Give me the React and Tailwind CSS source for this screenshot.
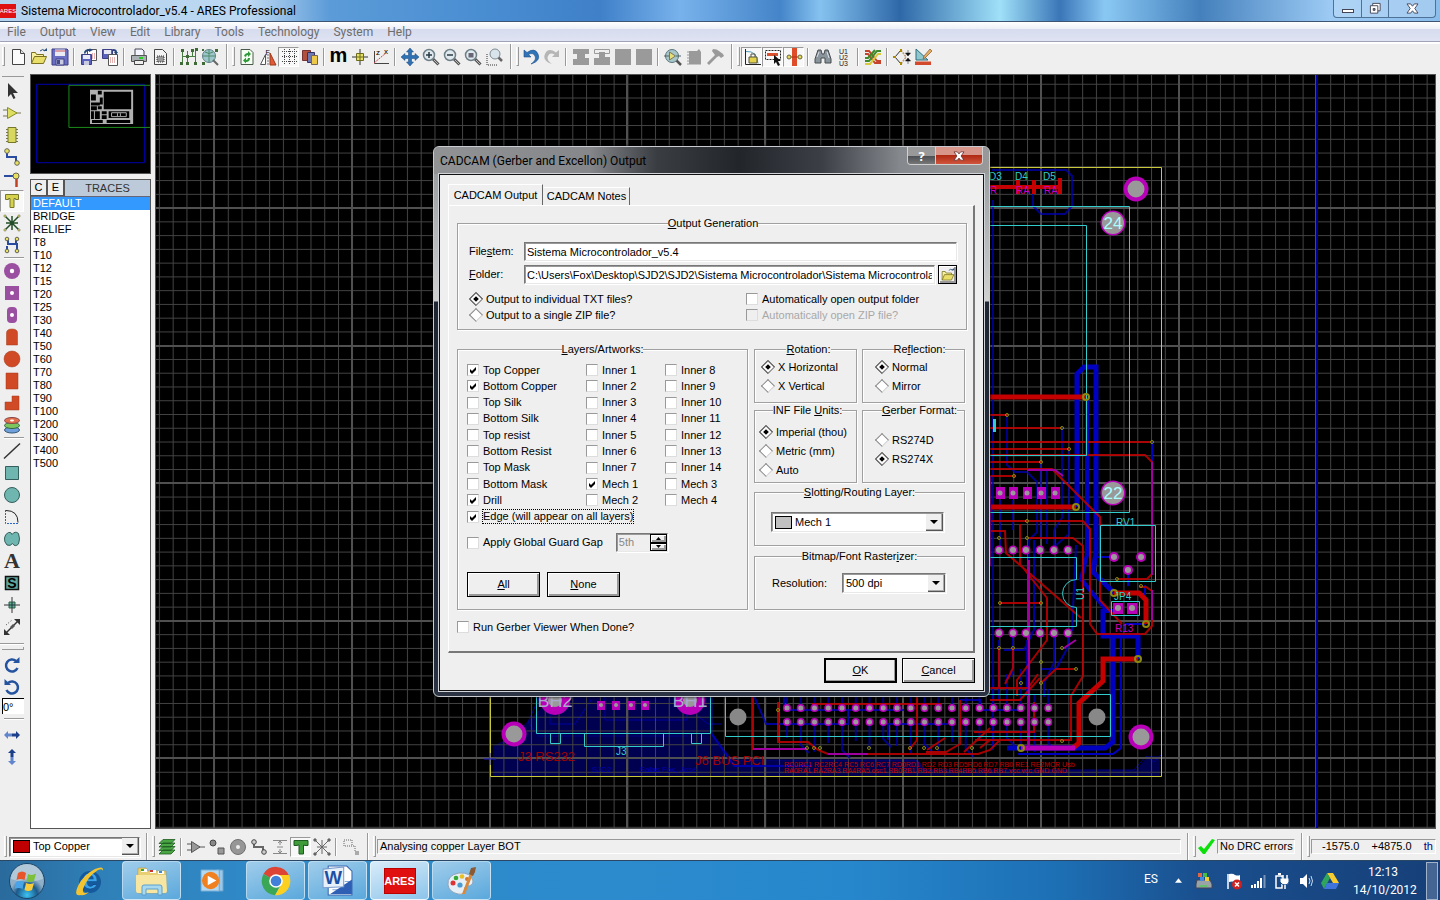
import React, { useState } from 'react';

const ui = 'font-["Liberation_Sans",Arial,sans-serif] text-[11px] leading-[13px]';
const segoe = 'font-[Roboto,"Noto_Sans",sans-serif] text-[12px] leading-[16px]';

function Ic({ children, size = 18 }) {
  return (
    <svg viewBox="0 0 18 18" width={size} height={size} aria-hidden="true" className="block shrink-0">
      {children}
    </svg>
  );
}

const floppy = (
  <>
    <path d="M1 1h15l1 1v15H1z" fill="#6a6fc4" stroke="#3c3f86" />
    <path d="M4 1.500h10V8H4z" fill="#e8eaf6" />
    <path d="M4 3h10" stroke="#c55" />
    <path d="M5 11h8v6H5z" fill="#c9cbe0" stroke="#3c3f86" />
    <path d="M6 12h3v4H6z" fill="#444a8c" />
  </>
);
const lens = (
  <>
    <path d="M11 11l5.500 5.500" stroke="#555" strokeWidth="3" />
    <path d="M12 12l4 4" stroke="#bbb" strokeWidth="1" />
    <circle cx="7" cy="7" r="5.500" fill="#dfe9ee" stroke="#6f7f88" strokeWidth="1.500" />
  </>
);
const grayPad = '#9a9a9a';
const face = 'Liberation Sans, Arial, sans-serif';

// toolbar drawings, all on an 18 unit grid
const art = {
  new: <><path d="M3.500 1.500h8l4 4v11h-12z" fill="#fbfbfb" stroke="#444" /><path d="M11.500 1.500v4h4" fill="#ddd" stroke="#444" /></>,
  open: <><path d="M1.500 15.500v-11h4l1 2h7v3" fill="#f7f0a0" stroke="#7a7020" /><path d="M1.500 15.500l3-7h12l-3 7z" fill="#eade6a" stroke="#7a7020" /><path d="M10 3q3-3 5 0" fill="none" stroke="#2d4f7c" /><path d="M13 3h4v-3z" fill="#2d4f7c" /></>,
  save: floppy,
  import: <><path d="M7.500 1.500h9v11h-9z" fill="#fff" stroke="#555" /><path d="M12 6h3M12 8h3M12 10h3" stroke="#c66" strokeDasharray="1 1" /><path d="M1.500 6.500h10v10h-10z" fill="#5a62bd" stroke="#3c3f86" /><path d="M3 7h7v4H3z" fill="#e8eaf6" /><path d="M4 13h5v4H4z" fill="#c9cbe0" /><path d="M4 5q0-4 6-4l-1-1 4 2-4 2V3Q6 3 5 6z" fill="#24467c" /></>,
  export: <><path d="M1.500 1.500h10v9h-10z" fill="#5a62bd" stroke="#3c3f86" /><path d="M3 2h7v4H3z" fill="#e8eaf6" /><path d="M7.500 6.500h9v11h-9z" fill="#fff" stroke="#555" /><path d="M9 10h6M9 12h6M9 14h6" stroke="#c66" strokeDasharray="1 1" /><path d="M12 1q4 0 4 3h1l-2 3-2-3h1q0-1-2-1z" fill="#24467c" /></>,
  print: <><path d="M5 1h7l2 2v5H5z" fill="#f5f5ff" stroke="#445" /><path d="M1.500 7.500h15v6h-15z" fill="#aab0b4" stroke="#555" /><path d="M4.500 12.500h9v4h-9z" fill="#eee" stroke="#444" /><path d="M9 10h4" stroke="#2c2" strokeWidth="2" /></>,
  area: <><path d="M3.500 1.500h8l4 4v11h-12z" fill="#f4f4f4" stroke="#444" /><path d="M6 8h7v6H6z" fill="#999" stroke="#333" strokeDasharray="1 1" /></>,
  net: <><path d="M2.500 3v12M7.500 3v13M2 8.500h14M12.500 3v6M15.500 1v15" stroke="#4a7a44" fill="none" /><path d="M1 1h3v3H1zM11 1h3v3h-3zM15 0h3v3h-3zM0 14h3v3H0zM6 14h3v3H6zM6 7h3v3H6zM14 14h3v3h-3z" fill="#3f6a38" /></>,
  web: <><circle cx="8" cy="8" r="6.500" fill="#9cc6cc" stroke="#5f7f84" /><path d="M2 8h12M8 2v12M4 4q4 3 8 0" stroke="#4f8a6a" fill="none" /><path d="M12 12l5 5" stroke="#666" strokeWidth="2" /><path d="M1 1h2v2H1zM14 1h3v3h-3zM1 14h3v3H1z" fill="#3f6a38" /></>,
  redraw: <><path d="M3 1.500h9l3 3v12H3z" fill="#f6fff4" stroke="#4a5a4a" /><path d="M6 8q1-3 4-3V3l3 3-3 3V7q-2 0-2 2zM12 10q0 4-4 4v1.500l-3-3 3-3V12q2 0 2-2z" fill="#2f9a37" /></>,
  flip: <><path d="M6.500 6.500v10h-5z" fill="#fff" stroke="#555" /><path d="M11 5v12h6z" fill="#e4583a" stroke="#9a3a18" /><path d="M9 6v11" stroke="#777" strokeDasharray="2 1" /><text x="6.500" y="7" fontSize="7" fontFamily={face}>F</text></>,
  grid: <path d="M2 3.500h15M2 8.500h15M2 13.500h15M4.500 1v16M9.500 1v16M14.500 1v16" stroke="#444" strokeDasharray="1 1" />,
  layers: <><path d="M1.500 2.500h8v10h-8z" fill="#b3503c" stroke="#733" /><path d="M6.500 4.500h7v10h-7z" fill="#6f78b0" stroke="#336" /><path d="M10.500 7.500h6v9h-6z" fill="#ecc94a" stroke="#765" /></>,
  origin: <><path d="M1 9h16M9 1v16" stroke="#333" /><path d="M5.500 5.500h7v7h-7z" fill="#e8e060" stroke="#6a6a20" /><path d="M9 6v6M6 9h6" stroke="#6a6a20" /></>,
  polar: <><path d="M2.500 3v12.500H17" fill="none" stroke="#444" /><path d="M2 15L14 5" stroke="#c44" strokeDasharray="2 1" /><text x="4" y="7" fontSize="8" fontFamily={face}>z</text><text x="12" y="6" fontSize="8" fontFamily={face}>x</text></>,
  pan: <path d="M9 0l3.500 4h-2v3.500H14v-2L18 9l-4 3.500v-2h-3.500V14h2L9 18l-3.500-4h2v-3.500H4v2L0 9l4-3.500v2h3.500V4h-2z" fill="#2f72b4" stroke="#1b4678" strokeWidth=".5" />,
  zin: <>{lens}<path d="M4 7h6M7 4v6" stroke="#2a3a44" strokeWidth="1.500" /></>,
  zout: <>{lens}<path d="M4 7h6" stroke="#2a3a44" strokeWidth="1.500" /></>,
  zall: <>{lens}<path d="M4.500 5h5v4.500h-5z" fill="#667" /></>,
  zarea: <><path d="M2 6v11h10" fill="none" stroke="#333" strokeDasharray="1 1" /><g transform="translate(4 0)"><path d="M9 9l4 4" stroke="#666" strokeWidth="2.500" /><circle cx="6" cy="6" r="5" fill="#d9e4ea" stroke="#7c8b94" /></g></>,
  undo: <path d="M2 2v7h7L6.500 6.500Q11 4 13 8t-4 8Q19 13 16 6T5 4.500z" fill="#2f74b8" stroke="#1e4f86" strokeWidth=".6" />,
  redo: <path d="M16 2v7H9l2.500-2.500Q7 4 5 8t4 8Q-1 13 2 6t11-1.500z" fill="#b5b5b5" />,
  cut: <path d="M1 1h16v5h-4v4h4v7H1v-6h4V6H1z" fill={grayPad} />,
  mov: <><path d="M1.500 1.500h15v4h-15z" fill="#eee" stroke={grayPad} /><path d="M6 4h6v5h5v8H1v-7h5z" fill={grayPad} /></>,
  blk: <path d="M1 1h16v16H1z" fill={grayPad} />,
  pick: <><path d="M11 11l6 6" stroke="#555" strokeWidth="2.500" /><circle cx="8" cy="8" r="6.500" fill="#a9c6c9" stroke="#58767c" /><path d="M5.500 4l6 4-6 4z" fill="#e6df74" stroke="#776" /><path d="M0 8h5M12 8h5" stroke="#566" /></>,
  pkg: <><path d="M4 3h8l2-2 2 3v12H4z" fill={grayPad} /><path d="M2 4h13M2 7h14M2 10h14M2 13h14M2 16h14" stroke={grayPad} /></>,
  ham: <path d="M1 15L9 7 6 3l1-2q4 0 6 2l4 3 1 2-3 2-2-2-2 1-8 8z" fill={grayPad} />,
  lock: <><path d="M2.500 1v15.500H18" fill="none" stroke="#222" /><path d="M3 3.500q11-1 12 12" fill="none" stroke="#59b" /><path d="M6 9h8v6H6z" fill="#e3d24a" stroke="#554" /><path d="M8 9V6h4v3" fill="none" stroke="#554" /></>,
  sel: <><path d="M1.500 2.500h15v9h-15z" fill="none" stroke="#222" strokeDasharray="2 1" /><path d="M3 5h11v3H3z" fill="#d8502e" /><path d="M10 7l7 6h-3l2 4-2 1-2-4-2 2z" fill="#111" /></>,
  trk: <><path d="M7 0h5v18H7z" fill="#df4c28" /><circle cx="4" cy="9" r="2" fill="#e6d954" stroke="#664" /><circle cx="15" cy="9" r="2" fill="#e6d954" stroke="#664" /><path d="M6 9h7" stroke="#a32" /></>,
  bino: <><path d="M4 2h3l1 4h2l1-4h3l3 9v4h-6v-5H7v5H1v-4z" fill="#8a959b" stroke="#454c50" /><path d="M3 9l2-5M13 4l2 6" stroke="#dde" /></>,
  annot: <g fontSize="7" fontFamily={face} fill="#222"><text x="4" y="6">U1</text><text x="4" y="12">U2</text><text x="4" y="18">U3</text></g>,
  auto: <><path d="M1 3h4l8 10h4M1 6h3l7 9h6" fill="none" stroke="#c5422c" strokeWidth="2" /><path d="M1 13h4L13 3h4M1 10h3l7-8" fill="none" stroke="#3f8a2c" strokeWidth="2" /><path d="M1 16h5l8-10h3" fill="none" stroke="#d8c93a" strokeWidth="2" /></>,
  drc: <><path d="M8 2L2 9l6 7" fill="none" stroke="#333" /><path d="M8 2l5 7-5 7" fill="none" stroke="#b97" strokeWidth="1.500" strokeDasharray="2 1" /><path d="M0 9h3M8 1v3M8 14v3" stroke="#a80" strokeWidth="2" /><path d="M15 2v5M15 11v5M12.500 5h5L15 8zM12.500 13h5L15 10z" stroke="#111" fill="#111" strokeWidth=".5" /></>,
  mfg: <><path d="M2 1v11h12z" fill="#8fc7cf" stroke="#2e6f7c" /><path d="M10 8l6-7 2 2-7 7-2 1z" fill="#e3b05a" stroke="#854" strokeWidth=".7" /><path d="M1 13.500h16V17H1z" fill="#d3492c" /></>,

  arrow: <path d="M5 1v14l3-3 2.500 5 2-1L10 11h5z" fill="#333" />,
  comp: <><path d="M0 6h5M0 12h5M13 9h5" stroke="#775" /><path d="M4.500 3.500v11L14 9z" fill="#dede60" stroke="#8a8a30" /></>,
  chip: <><path d="M3 3.500h12M3 6.500h12M3 9.500h12M3 12.500h12M3 15.500h12" stroke="#775" /><path d="M5 1.500h8v15H5z" fill="#d8d860" stroke="#77772a" /></>,
  trace: <><path d="M4 5v4h9v5" fill="none" stroke="#2a4ca0" strokeWidth="2" /><circle cx="4" cy="3" r="2.300" fill="#e8e060" stroke="#665" /><circle cx="14" cy="15" r="2.300" fill="#e8e060" stroke="#665" /></>,
  via: <><path d="M1 6h12" stroke="#2a4ca0" strokeWidth="2" /><path d="M13.500 6v11" stroke="#c2421f" strokeWidth="2.500" /><circle cx="13" cy="6" r="3" fill="#e8e060" stroke="#665" /></>,
  zone: <path d="M2.500 2.500h13v5h-3v-1H11v9H7v-9H5.500v1h-3z" fill="#d6d24e" stroke="#77772a" />,
  rats: <><path d="M2 2l14 14M16 2L2 16M9 2v14M3 9h12" stroke="#234d26" strokeWidth="1.500" /><path d="M1 1h2v2H1zM15 1h2v2h-2zM1 15h2v2H1zM15 15h2v2h-2z" fill="#e8e060" stroke="#665" strokeWidth=".5" /></>,
  conn: <><path d="M5 3v5h8V3M4 15v-5M14 15V8H5" fill="none" stroke="#2a4ca0" strokeWidth="2" /><circle cx="4" cy="3" r="1.800" fill="#e8e060" stroke="#665" /><circle cx="14" cy="3" r="1.800" fill="#e8e060" stroke="#665" /><circle cx="4" cy="15" r="1.800" fill="#e8e060" stroke="#665" /><circle cx="14" cy="15" r="1.800" fill="#e8e060" stroke="#665" /></>,
  pcirc: <><circle cx="9" cy="9" r="8" fill="#9b4fa0" /><circle cx="9" cy="9" r="2.200" fill="#fff" /></>,
  psq: <><path d="M2 2h14v14H2z" fill="#9b4fa0" /><circle cx="9" cy="9" r="2" fill="#fff" /></>,
  pdil: <><rect x="4" y="1" width="10" height="16" rx="4" fill="#9b4fa0" /><circle cx="9" cy="9" r="2" fill="#fff" /></>,
  edge: <path d="M3.500 17V5q0-4 5.500-4t5.500 4v12z" fill="#d04a26" stroke="#a43a1c" strokeWidth=".5" />,
  csmt: <circle cx="9" cy="9" r="8" fill="#d04a26" stroke="#a43a1c" strokeWidth=".5" />,
  rsmt: <path d="M3 1h12v16H3z" fill="#d04a26" stroke="#a43a1c" strokeWidth=".5" />,
  poly: <path d="M9 2h7v14H2V8h7z" fill="#d04a26" stroke="#a43a1c" strokeWidth=".5" />,
  stack: <><ellipse cx="9" cy="14" rx="7.500" ry="3" fill="#6fa0dc" stroke="#357" /><ellipse cx="9" cy="9.500" rx="7.500" ry="3" fill="#7cc45e" stroke="#364" /><ellipse cx="9" cy="4.500" rx="7.500" ry="3" fill="#e2704c" stroke="#844" /><ellipse cx="9" cy="4.500" rx="2" ry="1" fill="#fff" /></>,
  line: <path d="M1 16.500L17 1.500" stroke="#333" strokeWidth="1.500" />,
  box: <path d="M2.500 2.500h13v13h-13z" fill="#6fb5b0" stroke="#355f5c" />,
  circ: <circle cx="9" cy="9" r="7.500" fill="#6fb5b0" stroke="#355f5c" />,
  arc: <><path d="M2.500 2v13.500H15" fill="none" stroke="#2a64c8" strokeDasharray="2 1" /><path d="M3 2.500q12 0 12 12" fill="none" stroke="#222" /></>,
  path2: <path d="M5.500 2.500q2.500-1 3.500 2 3-4 6.500-1 2 5.500 0 10.500-3.500 3.500-6-.500-2 3-5.500 1.500Q1 12 1.500 8t4-5.500z" fill="#6fb5b0" stroke="#355f5c" />,
  sym: <><path d="M2.500 2.500h13v13h-13z" fill="#5fa79d" stroke="#111" strokeWidth="1.500" /><text x="9" y="14" textAnchor="middle" fontSize="14" fontWeight="700" fontFamily={face}>S</text></>,
  mark: <><path d="M9 1v16M1 9h16" stroke="#333" /><path d="M6 6h6v6H6z" fill="#5fb08c" stroke="#2f5f4c" /><path d="M9 6v6M6 9h6" stroke="#234" /></>,
  dim: <><path d="M2 16L16 2" stroke="#333" strokeWidth="1.500" /><path d="M11 1h6v6l-2-2-2-2zM1 11v6h6l-2-2-2-2z" fill="#333" /><path d="M7 9l3-3 2 2-3 3z" fill="#555" /><path d="M3 7l6-5" stroke="#444" strokeDasharray="1 2" /></>,
  cw: <><path d="M13 5a6 6 0 1 0 1.500 7" fill="none" stroke="#2453a0" strokeWidth="2.500" /><path d="M10 7h6.500V1z" fill="#2453a0" /></>,
  ccw: <><path d="M5 5a6 6 0 1 1-1.500 7" fill="none" stroke="#2453a0" strokeWidth="2.500" /><path d="M8 7H1.500V1z" fill="#2453a0" /></>,
  hflip: <><path d="M9 7.500H5V5L1 9l4 4v-2.500h4z" fill="#6286cc" /><path d="M9 7.500h4V5l4 4-4 4v-2.500H9z" fill="#1c3f8c" /></>,
  vflip: <><path d="M7.500 9V5H5l4-4 4 4h-2.500v4z" fill="#1c3f8c" /><path d="M7.500 9v4H5l4 4 4-4h-2.500V9z" fill="#6286cc" /></>,

  slayer: <path d="M5 12h12l-4 4H1zM5 8.500h12l-4 4H1zM5 5h12l-4 4H1zM5 1.500h12l-4 4H1z" fill="#4aa644" stroke="#1d5a20" strokeWidth=".8" />,
  scomp: <><path d="M0 6h5M0 12h5M12 9h6" stroke="#555" /><path d="M4.500 3.500v11L13 9z" fill="#999" stroke="#555" /></>,
  spads: <><circle cx="5" cy="5" r="3" fill="#888" stroke="#444" /><path d="M10 10h6v6h-6z" fill="#999" stroke="#555" /></>,
  sdonut: <><circle cx="9" cy="9" r="7.500" fill="#969696" stroke="#707070" /><circle cx="9" cy="9" r="2" fill="#eee" /></>,
  strace: <><path d="M4 5v4h9v5" fill="none" stroke="#666" strokeWidth="2" /><circle cx="4" cy="4" r="2.300" fill="#ccc" stroke="#444" /><circle cx="14" cy="14" r="2.300" fill="#ccc" stroke="#444" /></>,
  sdim: <path d="M2 2.500h14M2 15.500h14M9 3v4M9 11v4M7 5l2-2 2 2M7 13l2 2 2-2M6 9h6" fill="none" stroke="#888" />,
  szone: <path d="M2 2.500h14v5h-3.500V7h-1v9H7V7H5.500v.5H2z" fill="#3f9a3a" stroke="#1d5a20" />,
  srats: <><path d="M2 2l14 14M16 2L2 16M9 2v14M4 9h10" stroke="#666" /><path d="M1 1h2v2H1zM15 1h2v2h-2zM1 15h2v2H1zM15 15h2v2h-2z" fill="#999" stroke="#555" /></>,
  ssel: <><path d="M2 2h8v6H2zM9 8h4v6" fill="none" stroke="#aaa" strokeWidth="2" strokeDasharray="1 1" /><path d="M13 13h4v4h-4z" fill="#aaa" /></>,
};

function Tool({ name, pressed, wide }) {
  return (
    <button
      type="button"
      aria-label={name}
      className={`flex shrink-0 items-center justify-center ${wide ? 'h-[22px] w-full' : 'h-5 w-[21px]'} ${
        pressed ? 'border border-t-[#999] border-l-[#999] border-r-white border-b-white bg-[#f8f8f8]' : ''
      }`}
    >
      <Ic>{art[name]}</Ic>
    </button>
  );
}

const Sep = () => <span className="mx-[3px] h-[18px] w-[2px] shrink-0 border-l border-[#999] bg-white" />;
const Break = () => (
  <span className="flex w-4 shrink-0 self-stretch pl-[6px]">
    <span className="w-[2px] border-l border-[#999] bg-white" />
    <span className="my-[3px] ml-1 w-[3px] border-r border-b border-l border-[#999] border-l-white" />
  </span>
);
const Grip = () => <span className="my-[3px] w-[3px] shrink-0 self-stretch border-r border-b border-l border-[#999] border-l-white" />;

const mainTools = [
  'new', 'open', 'save', '|', 'import', 'export', '|', 'print', 'area', '|', 'net', 'web', '||',
  'redraw', 'flip', '*grid', 'layers', '|', 'm', 'origin', 'polar', '|', 'pan', 'zin', 'zout', 'zall', 'zarea', '||',
  'undo', 'redo', '|', 'cut', 'mov', 'blk', 'blk', '|', 'pick', 'pkg', 'ham', '||',
  '*lock', '*sel', '*trk', '|', 'bino', 'annot', '|', 'auto', '|', 'drc', 'mfg',
];
const sideTools = [
  'arrow', 'comp', 'chip', 'trace', 'via', '*zone', 'rats', 'conn', '|',
  'pcirc', 'psq', 'pdil', 'edge', 'csmt', 'rsmt', 'poly', 'stack', '|',
  'line', 'box', 'circ', 'arc', 'path2', 'A', 'sym', 'mark', 'dim',
];

function ToolRow({ tools }) {
  return tools.map((t, i) => {
    if (t === '|') return <Sep key={i} />;
    if (t === '||') return <Break key={i} />;
    if (t === 'm') return (
      <button key={i} type="button" className='w-[21px] shrink-0 pb-[3px] text-center font-["Liberation_Sans",Arial,sans-serif] text-[20px] leading-[22px] font-bold text-black'>m</button>
    );
    return <Tool key={i} name={t.replace('*', '')} pressed={t[0] === '*'} />;
  });
}

function AresLogo({ small }) {
  return (
    <span className={`flex shrink-0 items-center justify-center bg-[#e01010] font-["Liberation_Sans",Arial,sans-serif] text-white ${
      small ? 'h-[14px] w-4 text-[6px] leading-[8px]' : 'h-[26px] w-8 border border-[#b00] text-[11px] leading-[14px] font-bold'
    }`}>
      ARES
    </span>
  );
}

function TitleBar() {
  return (
    <header className="flex h-[22px] shrink-0 items-center border-b border-[#3d5573] bg-[linear-gradient(90deg,#b4d2ee_0px,#bcd8f2_250px,#5b9bd8_330px,#4a8ed2_480px,#3f80c8_600px,#78b2ec_680px,#4484c8_780px,#86c2f0_820px,#2f68a8_900px,#a0e0f8_1000px,#3a76b8_1060px,#8ac8f4_1105px,#4480bc_1200px,#9ccaf4_1330px,#8abcec_1440px)]">
      <AresLogo small />
      <h1 className={`ml-[5px] ${segoe} text-black`}>Sistema Microcontrolador_v5.4 - ARES Professional</h1>
      <div className="mr-1 ml-auto flex h-[18px] self-start rounded-b border border-t-0 border-[#4d7296] bg-white/20">
        <button type="button" aria-label="Minimize" className="flex w-7 items-center justify-center border-r border-[#4d7296]">
          <span className="mt-1 h-1 w-3 border border-[#445] bg-white" />
        </button>
        <button type="button" aria-label="Restore" className="flex w-[27px] items-center justify-center border-r border-[#4d7296]">
          <svg viewBox="0 0 14 14" width="13" height="13"><path d="M4 1.500h8v8H4z" fill="#fff" stroke="#445" /><path d="M1.500 4h8v8h-8z" fill="#fff" stroke="#445" /><path d="M4.500 7h2v2h-2z" fill="#789" stroke="#445" /></svg>
        </button>
        <button type="button" aria-label="Close" className="flex w-[46px] items-center justify-center">
          <svg viewBox="0 0 14 12" width="13" height="11"><path d="M1 1h4l2 2.500L9 1h4L9.500 6l3.500 5H9L7 8.500 5 11H1l3.500-5z" fill="#fff" stroke="#445" /></svg>
        </button>
      </div>
    </header>
  );
}

function MenuBar() {
  return (
    <nav className={`flex h-[20px] shrink-0 items-center gap-[14px] border-b border-[#a0a4b4] bg-[linear-gradient(#fff_0%,#eef0f8_35%,#d6dcee_36%,#dfe3f3_100%)] pl-[7px] ${segoe} text-[#6d6d6d]`}>
      {['File', 'Output', 'View', 'Edit', 'Library', 'Tools', 'Technology', 'System', 'Help'].map((m) => (
        <button key={m} type="button">{m}</button>
      ))}
    </nav>
  );
}

function SideBar() {
  return (
    <aside className="flex w-[27px] shrink-0 flex-col pr-[3px]">
      <span className="mb-[3px] ml-[2px] h-[3px] border-b border-[#999]" />
      {sideTools.map((t, i) => {
        if (t === '|') return <span key={i} className="my-[1px] ml-1 h-[2px] border-t border-[#999] bg-white" />;
        if (t === 'A') return (
          <button key={i} type="button" className='h-[22px] w-full font-["Liberation_Serif",serif] text-[22px] leading-[22px] font-bold text-[#333]'>A</button>
        );
        return <Tool key={i} name={t.replace('*', '')} pressed={t[0] === '*'} wide />;
      })}
      <span className="mt-[5px] h-[2px] border-t border-[#999] bg-white" />
      <span className="mt-[2px] mb-1 ml-[2px] h-[3px] border-r border-b border-[#999]" />
      <Tool name="cw" wide />
      <Tool name="ccw" wide />
      <input aria-label="Angle" defaultValue="0°" className={`ml-[2px] h-4 w-[22px] border-t border-l border-black bg-white ${ui}`} />
      <span className="mt-1 mb-1 ml-1 h-[2px] border-t border-[#999] bg-white" />
      <Tool name="hflip" wide />
      <Tool name="vflip" wide />
    </aside>
  );
}

const traces = ['DEFAULT', 'BRIDGE', 'RELIEF', 'T8', 'T10', 'T12', 'T15', 'T20', 'T25', 'T30', 'T40', 'T50', 'T60', 'T70', 'T80', 'T90', 'T100', 'T200', 'T300', 'T400', 'T500'];

function ObjectPanel() {
  const [picked, setPicked] = useState('DEFAULT');
  return (
    <section className="mr-1 ml-[3px] flex w-[121px] shrink-0 flex-col gap-[5px]">
      <svg viewBox="0 0 121 100" width="121" height="100" className="block border border-[#555] bg-black">
        <path d="M5.500 9.500h110v80H5.500z" fill="none" stroke="#0000b0" />
        <path d="M122 10.500H38.500v43H122" fill="none" stroke="#1c8c1c" />
        <path d="M60 15h44v35H60z" fill="#b0b0b0" />
        <path d="M74 17h28v18H74zM61 20h5v6h-5zM68 16h4v4h-4zM61 28h9v3h-9zM61 32h6v4h-6zM79 37h21v7H79zM61 37h3v8h-3zM65 37h5v8h-5zM72 37h5v3h-5zM72 41h5v4h-5zM62 46h11v3H62zM77 46h24v3H77zM70 23h3v7h-3zM68 32h4v3h-4z" fill="#000" />
        <path d="M82 38.500h15v4H82zM88 39v3M91 39v3" stroke="#b0b0b0" fill="none" />
      </svg>
      <div className={`flex min-h-0 flex-1 flex-col border border-[#555] bg-white ${ui}`}>
        <div className="flex h-[17px] items-stretch border-b border-[#667] bg-[#bccad9] text-[#333]">
          <button type="button" className="w-[17px] border-r-2 border-b border-[#555] bg-[#efefef] text-black">C</button>
          <button type="button" className="w-[17px] border-r-2 border-b border-[#555] bg-[#efefef] text-black">E</button>
          <h2 className="flex-1 pt-[2px] text-center">TRACES</h2>
        </div>
        <ul>
          {traces.map((t) => (
            <li key={t}>
              <button
                type="button"
                onClick={() => setPicked(t)}
                className={`block h-[13px] w-full pl-[2px] text-left ${picked === t ? 'bg-[#3399ff] text-white' : 'text-black'}`}
              >
                {t}
              </button>
            </li>
          ))}
        </ul>
      </div>
    </section>
  );
}

const range = (n, from, step) => Array.from({ length: n }, (_, i) => from + i * step);

function Pad({ x, y, r = 5, hole = 3 }) {
  return (
    <g>
      <circle cx={x} cy={y} r={r} fill="#b800b8" />
      <circle cx={x} cy={y} r={hole} fill="#999" />
    </g>
  );
}

function Via({ x, y, r = 2 }) {
  return <circle cx={x} cy={y} r={r} fill="none" stroke="#8a8a10" strokeWidth={r > 2 ? 2 : 1} />;
}

function Board() {
  const bus = range(20, 787, 13.75);
  return (
    <svg
      viewBox="156 75 1279 753"
      preserveAspectRatio="xMinYMin slice"
      className="h-full min-w-0 flex-1 border border-[#555] bg-black"
      aria-label="Board layout"
    >
      <defs>
        <pattern id="minor" x="214" y="70" width="13.780" height="13.760" patternUnits="userSpaceOnUse">
          <path d="M.5 0v14M0 .5h14" stroke="#434343" />
        </pattern>
      </defs>
      <path d="M493 776v-30l20-10 30-30v-10h170v38l20 26h185l8 10h210l12-14h12v20z" fill="#000050" />
      <path d="M540 696l-12 26 10 14h150M711 734l20 26h185l8 10h210l12-14 8 6 8-8" fill="none" stroke="#000088" />
      <path d="M605 696v24h82v-24M550 710v14h25l16-24M690 710l18 14h14" fill="none" stroke="#0000a0" />
      <path d="M155 74h1281v755H155z" fill="url(#minor)" />
      <path
        d={range(9, 214, 137.8).map((x) => `M${Math.round(x)} 74V829`).join('') + range(5, 208, 137.6).map((y) => `M155 ${Math.round(y)}H1436`).join('')}
        stroke="#505050" strokeWidth="2"
      />
      <path d="M1317 74v755" stroke="#0000a0" strokeWidth="2" />

      {/* bottom copper */}
      <g fill="none" stroke="#0000c0">
        <path d="M1077 507V374l7-7h12v186l-3 19 21 21" strokeWidth="5" />
        <path d="M1087 397v158l-6 24 26 32h14" strokeWidth="4" />
        <path d="M1103 609v27h35v23M1113 636v106l-8 6h-98" strokeWidth="5" />
        <path d="M1152 442v20M1121 636v112l-8 6h-95M1145 585v39h-20M1096 557h18M1128 570v16" strokeWidth="2" />
        <path d="M992 170h74l6 6v30l-7 8h-24l-8-8v-22" strokeWidth="2" opacity=".7" />
        <path d="M1007 415v50l8 7h12l10 10v50l-8 8v80M1062 428v90l-8 12v20M1069 449v85l-14 12M1041 462v76M1047 470v74M993 200v550M1013 500v30M1000 500v48" strokeWidth="2" opacity=".7" />
        <path d="M1034 540v90l-10 20h-20M1068 633v14l-12 22h-14M1076 545l-4 86M1013 633v40l-8 8M1054 633v30l-10 20v14M1027 640v56M999 640v60" strokeWidth="2" opacity=".8" />
        <path d="M712 734l22 32h78M754 696l12 28h82v-14M784 696v14h120M888 740v-16h60M960 700h20v10h40" strokeWidth="2" opacity=".8" />
        {bus.map((x, i) => <path key={x} d={`M${x} 724v${14 + (i * 7) % 16}${i % 3 === 1 ? 'l8 8' : ''}M${x} 706v-${12 + (i * 5) % 30 * (i > 14 ? 1 : 0)}`} strokeWidth="2" opacity=".7" />)}
      </g>

      {/* top copper */}
      <g fill="none" stroke="#c40000">
        <path d="M990 397h96M990 507h86M1114 593h25l7 7v24M1138 659h-35v22l-24 22v40l-6 5" strokeWidth="5" />
        <path d="M990 187h70V178M1018 194v-14M1034 194v-14M1060 194v-14" strokeWidth="4" />
        <g opacity=".85">
          <path d="M990 415h17M990 428h72M990 442h162M990 449h79M990 455h155l7 7v112l-5 5h-30M990 462h51M990 469h62l48 48v83l22 24" strokeWidth="2" />
          <path d="M990 476h25M990 521h93l7 8v95l7 10h48l7-8v-35l-6-4h-7M1027 538h46l10 8v130l-12 20v44h-96" strokeWidth="2" />
          <path d="M990 531h15l1 22 75 65M1020 524v40l27 34v42l-30 40v16M1000 603h41M1013 648v20l-8 16M1076 669h-20l-15 14M999 648v40" strokeWidth="2" />
          <path d="M753 696v53h54M778 702v40h30l10 8 10 4h150l12-4 10-10h50M812 704h130M917 696v44l-8 10M945 738l-18 12M960 700v44l-14 8h-20M1060 740h-70l-10 8M974 732h60v-30" strokeWidth="2" />
          <path d="M990 728l-26 24M990 700h30l20-22M990 688h38l10-14" strokeWidth="2" />
        </g>
      </g>
      <path d="M1021 748h54" stroke="#b800b8" strokeWidth="5" />
      <path d="M753 749h54M828 754h40M1027 470h28l8 6M1029 560v188M990 476v90M1076 640l-12 8" stroke="#a000a0" strokeWidth="2" fill="none" />
      <path d="M1152 462v113M1152 590v30" stroke="#a000a0" strokeWidth="2" />

      {/* silk screen */}
      <g fill="none" stroke="#3cc" strokeWidth="1">
        <path d="M990 206.500h139.500V512.500H990M990 225.500h96.500v230H990" />
        <path d="M990 557.500h86.500v22a14 14 0 0 0 0 28v19H990" />
        <path d="M1100.500 525.500h55v56h-55zM1111.500 601.500h28v14h-28z" />
        <path d="M725.500 694.500h385v42h-385zM536.500 690v43.500h174V690M584.500 733.500v13h79v-13M550.500 733.500v10h10v-10M691.500 733.500v10h10v-10" />
        <path d="M994.500 419v13" strokeWidth="3" />
      </g>
      <path d="M490.500 167.500h671v609h-671z" fill="none" stroke="#c8c83c" />
      <path d="M484 759h12M490 753v12" stroke="#2020d0" fill="none" />

      {[[1136, 189], [1141, 737], [514, 734]].map(([x, y]) => <Pad key={y} x={x} y={y} r={12.5} hole={8.5} />)}
      {[223, 493].map((y) => <Pad key={y} x={1113} y={y} r={12.5} hole={11} />)}
      <Pad x={555} y={700} r={15} hole={7} />
      <Pad x={690} y={700} r={15} hole={7} />
      <circle cx="738" cy="717" r="8.500" fill="#888" />
      <circle cx="1097" cy="717" r="8.500" fill="#888" />
      {[1000, 1013, 1027, 1041, 1055].map((x) => <g key={x}><path d={`M${x - 4} 487h9v12h-9z`} fill="#b800b8" /><circle cx={x} cy="493" r="2.500" fill="#999" /></g>)}
      {[601, 616, 631, 645].map((x) => <g key={x}><path d={`M${x - 4} 701h8v9h-8z`} fill="#b800b8" /><circle cx={x} cy="705" r="2" fill="#999" /></g>)}
      {[1118, 1132].map((x) => <g key={x}><path d={`M${x - 5} 603h10v11h-10z`} fill="#b800b8" /><circle cx={x} cy="608" r="3" fill="#999" /></g>)}
      {[999, 1013, 1026, 1040, 1054, 1068].map((x) => <g key={x}><Pad x={x} y={550} r={4.5} /><Pad x={x} y={633} r={4.5} /></g>)}
      {bus.map((x) => <g key={x}><Pad x={x} y={708} r={4} hole={2.5} /><Pad x={x} y={722} r={4} hole={2.5} /></g>)}
      {[[1114, 557], [1141, 557], [1128, 570]].map(([x, y]) => <Pad key={x} x={x} y={y} r={5} />)}
      {[[1086, 397], [1076, 507], [1114, 593], [1146, 624], [1138, 659], [1021, 748]].map(([x, y]) => <Via key={x} x={x} y={y} r={3} />)}
      {[[1007, 415], [1062, 428], [1152, 442], [1069, 449], [1041, 462], [1014, 476], [1027, 521], [1027, 538], [999, 538], [1041, 603], [1000, 603], [1117, 579], [1141, 586], [1013, 648], [999, 648], [1062, 648], [1041, 662], [1076, 669], [1021, 683], [1041, 683], [1062, 741], [807, 748], [814, 748], [820, 748], [869, 748], [910, 748], [924, 748], [937, 748], [972, 748], [778, 710]].map(([x, y], i) => <Via key={i} x={x} y={y} r={1.5} />)}

      <g fontFamily={face} fill="#3cc">
        <g fontSize="17" textAnchor="middle" fill="#aff"><text x="1113" y="229">24</text><text x="1113" y="499">22</text></g>
        <g fontSize="18" textAnchor="middle" fill="#aac"><text x="555" y="707">BH2</text><text x="690" y="707">BH1</text></g>
        <g fontSize="10"><text x="989" y="180">D3</text><text x="1015" y="180">D4</text><text x="1043" y="180">D5</text><text x="1116" y="526">RV1</text><text x="1114" y="600">JP4</text><text x="616" y="755">J3</text><text transform="translate(1084 600) rotate(-90)">U1</text></g>
        <g fontSize="10" fill="#c800c8"><text x="990" y="194">R</text><text x="1016" y="194">RA</text><text x="1044" y="194">RA</text><text x="1115" y="632">R13</text></g>
        <g fontSize="13" fill="#a00000"><text x="518" y="761">J3 RS232</text><text x="695" y="765">J6 BUS PCI</text></g>
        <g fontSize="7" fill="#c80000"><text x="784" y="767">RC0RC1 RC2RC4 RC5 RC6 RC7 RD0RD1 RD2 RD3 RD5RD6 RD7 RB0 RE1 RE2MCR Usb</text><text x="784" y="773">RA0RA1 RA2RA3 RA4RA5 osc1 RB0RB1 RB2 RB3 RB4RB5 RB6 RB7 vcc vcc GND GND</text></g>
        <g fontSize="8" fill="#0000b4"><text x="592" y="772">SJD2</text><text x="640" y="772">Salas Fox, José</text></g>
      </g>
    </svg>
  );
}

const raised = 'border border-black bg-[#efefef] shadow-[inset_1px_1px_0_#fff,inset_-2px_-2px_0_#999]';
const sunken = 'border border-t-[#777] border-l-[#777] border-r-[#e8e8e8] border-b-[#e8e8e8] shadow-[inset_1px_1px_0_#999,1px_1px_0_#fff]';

function Check({ label, checked, disabled, focus }) {
  return (
    <label className={`flex h-4 items-center gap-[4px] whitespace-nowrap ${disabled ? 'text-[#a8a8a8]' : ''}`}>
      <span className="grid shrink-0">
        <input
          type="checkbox"
          defaultChecked={checked}
          disabled={disabled}
          className="peer col-start-1 row-start-1 size-[12px] appearance-none border border-t-[#999] border-l-[#999] border-r-[#ddd] border-b-[#ddd] bg-white disabled:bg-[#efefef]"
        />
        <svg viewBox="0 0 12 12" className="pointer-events-none invisible col-start-1 row-start-1 size-[12px] peer-checked:visible"><path d="M3 5v3l2 2 4-4V3L5 7z" fill="#000" /></svg>
      </span>
      <span className={focus ? 'outline-1 outline-dotted outline-black' : ''}>{label}</span>
    </label>
  );
}

function Radio({ name, label, checked }) {
  return (
    <label className="flex h-4 items-center gap-[4px] whitespace-nowrap">
      <span className="grid size-[13px] shrink-0 place-items-center">
        <input
          type="radio"
          name={name}
          defaultChecked={checked}
          className="size-[10px] rotate-45 appearance-none border border-t-[#888] border-l-[#888] border-r-[#ccc] border-b-[#888] bg-white checked:bg-black checked:shadow-[inset_0_0_0_2px_#fff]"
        />
      </span>
      <span>{label}</span>
    </label>
  );
}

function Group({ title, className, children }) {
  return (
    <fieldset className={`border border-[#a0a0a0] shadow-[1px_1px_0_#fff,inset_1px_1px_0_#fff] ${className}`}>
      <legend className="mx-auto bg-[#efefef]">{title}</legend>
      {children}
    </fieldset>
  );
}

function Combo({ id, value, swatch, label, className }) {
  return (
    <div className={`flex h-5 items-center bg-white ${sunken} ${className}`}>
      {swatch && <span className={`ml-[3px] h-[13px] w-[17px] shrink-0 border border-black ${swatch}`} />}
      <select id={id} aria-label={label} className="min-w-0 flex-1 appearance-none pl-[3px]">
        <option>{value}</option>
      </select>
      <span className="pointer-events-none flex h-[17px] w-[17px] items-center justify-center border-r border-b border-[#555] bg-[#efefef] shadow-[inset_-1px_-1px_0_#aaa]">
        <svg viewBox="0 0 8 4" width="8" height="4"><path d="M0 0h8L4 4z" /></svg>
      </span>
    </div>
  );
}

const layerCols = [
  ['Top Copper', 'Bottom Copper', 'Top Silk', 'Bottom Silk', 'Top resist', 'Bottom Resist', 'Top Mask', 'Bottom Mask', 'Drill', 'Edge (will appear on all layers)'],
  ['Inner 1', 'Inner 2', 'Inner 3', 'Inner 4', 'Inner 5', 'Inner 6', 'Inner 7', 'Mech 1', 'Mech 2'],
  ['Inner 8', 'Inner 9', 'Inner 10', 'Inner 11', 'Inner 12', 'Inner 13', 'Inner 14', 'Mech 3', 'Mech 4'],
];
const onLayers = ['Top Copper', 'Bottom Copper', 'Drill', 'Edge (will appear on all layers)', 'Mech 1'];

function CadcamDialog() {
  return (
    <div role="dialog" aria-label="CADCAM (Gerber and Excellon) Output" className="absolute top-[72px] left-[433px] w-[557px] rounded-md border border-[#c8ccd0] bg-[linear-gradient(#8a8d90_0px,#9da0a2_30px,#d0d0d0_154px,#1e2732_155px,#232c3c_500px,#2c3444_100%)] px-[5px] pb-[5px] shadow-[0_0_3px_#000]">
      <div className="-mx-[5px] flex h-[27px] items-center rounded-t-md bg-[linear-gradient(90deg,#909294_0%,#85878a_28%,#3a3d42_40%,#22252a_55%,#3c4046_70%,#85898e_84%,#999_100%)] pl-[6px]">
        <h2 className={`${segoe} text-black`}>CADCAM (Gerber and Excellon) Output</h2>
        <div className="mr-[6px] ml-auto flex h-[18px] self-start overflow-hidden rounded-b border border-t-0 border-[#d0d0d0] font-bold text-white">
          <button type="button" className="w-7 border-r border-[#d0d0d0] bg-[linear-gradient(#999_50%,#4a4d52_51%,#777)] font-['Open_Sans',sans-serif] text-[13px] leading-[16px]">?</button>
          <button type="button" aria-label="Close" className="flex w-[46px] items-center justify-center bg-[linear-gradient(#d8958a_45%,#b02a14_50%,#d0553c)]">
            <svg viewBox="0 0 14 12" width="12" height="10"><path d="M1 1h4l2 2.500L9 1h4L9.500 6l3.500 5H9L7 8.500 5 11H1l3.500-5z" fill="#fff" stroke="#633" /></svg>
          </button>
        </div>
      </div>
      <form className={`flex flex-col border border-[#111] bg-[#efefef] px-[8px] pt-[9px] pb-[7px] text-black shadow-[0_0_0_1px_#d0d4d8] ${ui}`}>
        <div role="tablist" className="flex items-end">
          <button type="button" role="tab" className="-mb-px h-[22px] w-[95px] border border-t-white border-l-white border-r-[#666] border-b-[#efefef] bg-[#efefef]">CADCAM Output</button>
          <button type="button" role="tab" className="h-[18px] w-[87px] border border-b-0 border-t-white border-l-transparent border-r-[#666]">CADCAM Notes</button>
        </div>
        <div className="border-t border-r-2 border-b-2 border-l border-t-white border-l-white border-r-[#777] border-b-[#777] pt-[11px] pr-[6px] pb-[16px] pl-[8px]">
          <Group title={<><u>O</u>utput Generation</>} className="h-[113px] pr-[9px] pl-[11px]">
            <div className="mt-[12px] flex items-center">
              <label htmlFor="stem" className="w-[55px]">File<u>s</u>tem:</label>
              <input id="stem" defaultValue="Sistema Microcontrolador_v5.4" className={`h-[19px] min-w-0 flex-1 bg-white px-[2px] ${sunken}`} />
            </div>
            <div className="mt-[4px] flex items-center">
              <label htmlFor="folder" className="w-[55px]"><u>F</u>older:</label>
              <input id="folder" defaultValue="C:\Users\Fox\Desktop\SJD2\SJD2\Sistema Microcontrolador\Sistema Microcontrolador" className={`h-[19px] min-w-0 flex-1 bg-white px-[2px] ${sunken}`} />
              <button type="button" aria-label="Browse" className={`ml-[3px] flex size-[19px] items-center justify-center ${raised}`}><Ic size={14}>{art.open}</Ic></button>
            </div>
            <div className="mt-[7px] grid grid-cols-[277px_1fr]">
              <Radio name="out" label="Output to individual TXT files?" checked />
              <Check label="Automatically open output folder" />
              <Radio name="out" label="Output to a single ZIP file?" />
              <Check label="Automatically open ZIP file?" disabled />
            </div>
          </Group>

          <div className="mt-[13px] flex gap-[6px]">
            <Group title={<><u>L</u>ayers/Artworks:</>} className="h-[267px] w-[291px] px-[9px]">
              <div className="mt-[6px] grid h-[163px] grid-cols-[119px_79px_1fr] grid-rows-10">
                {layerCols.map((col, c) => col.map((l, i) => (
                  <div key={l} style={{ gridColumn: c + 1, gridRow: i + 1 }}>
                    <Check label={l} checked={onLayers.includes(l)} focus={i === 9} />
                  </div>
                )))}
              </div>
              <div className="mt-[8px] flex items-center gap-[13px]">
                <Check label="Apply Global Guard Gap" />
                <div className={`flex h-[19px] w-[52px] ${sunken}`}>
                  <input aria-label="Guard gap" disabled defaultValue="5th" className="min-w-0 flex-1 px-[2px] text-[#888]" />
                  <span className="flex w-[17px] flex-col">
                    <button type="button" aria-label="Increase" className={`flex flex-1 items-center justify-center ${raised}`}><svg viewBox="0 0 5 3" width="5" height="3"><path d="M0 3h5L2.500 0z" /></svg></button>
                    <button type="button" aria-label="Decrease" className={`flex flex-1 items-center justify-center ${raised}`}><svg viewBox="0 0 5 3" width="5" height="3"><path d="M0 0h5L2.500 3z" /></svg></button>
                  </span>
                </div>
              </div>
              <div className="mt-[20px] flex gap-[7px]">
                <button type="button" className={`h-[25px] w-[73px] ${raised}`}><u>A</u>ll</button>
                <button type="button" className={`h-[25px] w-[73px] ${raised}`}><u>N</u>one</button>
              </div>
            </Group>
            <div className="flex w-[211px] flex-col">
              <div className="grid grid-cols-2 gap-x-[5px] gap-y-[1px]">
                <Group title={<><u>R</u>otation:</>} className="h-[60px] pl-[6px]">
                  <div className="mt-[3px] flex flex-col gap-[3px]">
                    <Radio name="rot" label="X Horizontal" checked />
                    <Radio name="rot" label="X Vertical" />
                  </div>
                </Group>
                <Group title={<>Re<u>f</u>lection:</>} className="h-[60px] pl-[12px]">
                  <div className="mt-[3px] flex flex-col gap-[3px]">
                    <Radio name="ref" label="Normal" checked />
                    <Radio name="ref" label="Mirror" />
                  </div>
                </Group>
                <Group title={<>INF File <u>U</u>nits:</>} className="h-[79px] pl-[4px]">
                  <div className="mt-[7px] flex flex-col gap-[3px]">
                    <Radio name="inf" label="Imperial (thou)" checked />
                    <Radio name="inf" label="Metric (mm)" />
                    <Radio name="inf" label="Auto" />
                  </div>
                </Group>
                <Group title={<><u>G</u>erber Format:</>} className="h-[79px] pl-[12px]">
                  <div className="mt-[15px] flex flex-col gap-[3px]">
                    <Radio name="fmt" label="RS274D" />
                    <Radio name="fmt" label="RS274X" checked />
                  </div>
                </Group>
              </div>
              <Group title={<><u>S</u>lotting/Routing Layer:</>} className="mt-[3px] h-[60px] px-[16px]">
                <Combo label="Slotting/Routing Layer" value="Mech 1" swatch="bg-[#c0c0c0]" className="mt-[13px] w-[173px]" />
              </Group>
              <Group title={<>Bitmap/Font Raster<u>i</u>zer:</>} className="mt-[4px] h-[60px] px-[17px]">
                <div className="mt-[10px] flex items-center">
                  <label htmlFor="dpi" className="w-[70px]">Resolution:</label>
                  <Combo id="dpi" value="500 dpi" className="w-[104px]" />
                </div>
              </Group>
            </div>
          </div>
          <div className="mt-[9px]"><Check label="Run Gerber Viewer When Done?" /></div>
        </div>
        <div className="mt-[5px] flex justify-end gap-[5px]">
          <button type="button" className={`h-[25px] w-[73px] outline-1 -outline-offset-2 outline-black ${raised}`}><u>O</u>K</button>
          <button type="button" className={`h-[25px] w-[73px] ${raised}`}><u>C</u>ancel</button>
        </div>
      </form>
    </div>
  );
}

const panel = 'flex h-[15px] items-center whitespace-nowrap border border-t-[#999] border-l-[#999] border-r-white border-b-white px-[2px]';

function StatusBar() {
  return (
    <div className={`flex h-[27px] shrink-0 items-center bg-[#efefef] pl-1 text-black ${ui}`}>
      <Grip />
      <Combo label="Layer" value="Top Copper" swatch="bg-[#c00000]" className="ml-[2px] w-[131px]" />
      <Break />
      <Tool name="slayer" /><Sep />
      {['scomp', 'spads', 'sdonut', 'strace', 'sdim', '*szone', 'srats'].map((t) => <Tool key={t} name={t.replace('*', '')} pressed={t[0] === '*'} />)}
      <Sep /><Tool name="ssel" />
      <Break />
      <div className={`${panel} flex-1`}>Analysing copper Layer BOT</div>
      <Break />
      <svg viewBox="0 0 18 16" width="18" height="16"><path d="M1 9l3-2 3 3L15 0l3 1L8 15H6z" fill="#0be00b" /></svg>
      <div className={`${panel} ml-[2px] w-[78px]`}>No DRC errors</div>
      <Break />
      <div className={`${panel} mr-1 w-[125px] justify-between pl-[10px]`}>
        <span>-1575.0</span><span>+4875.0</span><span className="text-[#000080]">th</span>
      </div>
    </div>
  );
}

function TaskButton({ label, open, active, children }) {
  return (
    <button
      type="button"
      aria-label={label}
      className={`flex h-[39px] w-[59px] items-center justify-center ${
        active ? 'rounded-sm border border-white/70 bg-[linear-gradient(160deg,#d8ecfa,#8cc4ea)]' : open ? 'rounded-sm border border-white/50 bg-[linear-gradient(160deg,#a0cdeb,#5aa8dc)]' : ''
      }`}
    >
      {children}
    </button>
  );
}

function TaskBar() {
  return (
    <footer className={`flex h-10 shrink-0 items-center border-t border-[#2a4866] bg-[linear-gradient(90deg,#2a6a9c_0px,#2f80b8_100px,#2f8ac8_260px,#2b8bcd_620px,#2787cc_850px,#1d6fb4_1060px,#1a4f8e_1200px,#163f78_1440px)] text-white ${segoe}`}>
      <button type="button" aria-label="Start" className="ml-2">
        <svg viewBox="0 0 38 38" width="38" height="38">
          <defs><radialGradient id="orb" cy=".9"><stop offset="0" stopColor="#3cc4f4" /><stop offset=".6" stopColor="#1c5a8c" /><stop offset="1" stopColor="#8fb0c8" /></radialGradient></defs>
          <circle cx="19" cy="19" r="17.500" fill="url(#orb)" stroke="#1a4468" />
          <path d="M3 17a16 15 0 0 1 32 0q-16 6-32 0z" fill="#fff" opacity=".3" />
          <path d="M10 11q4-3 8 0l-1.500 7q-4-2-8 0z" fill="#e8552a" /><path d="M20 12q4 2 8-.500L26 19q-4 2-7.500 0z" fill="#7cc03c" />
          <path d="M8 20q4-2 8 0l-1.500 7q-4-2-8 0z" fill="#4aa4e8" /><path d="M18 21q4 2 8 0l-2 7q-4 2-7.500 0z" fill="#f8cc3c" />
        </svg>
      </button>
      <div className="ml-[14px] flex gap-[3px]">
        <TaskButton label="Internet Explorer">
          <svg viewBox="0 0 34 34" width="34" height="34">
            <circle cx="17" cy="18" r="11" fill="#155a9c" />
            <text x="17" y="25" textAnchor="middle" fontSize="29" fontWeight="700" fontFamily={face} fill="#3aa4ec" stroke="#0c4a88" strokeWidth=".6">e</text>
            <path d="M30 7Q31 1 22 5 10 11 5 22t3 9q3 1 8-3-7 3-6-3Q14 13 25 6q5-2 5 1z" fill="#f4c430" />
          </svg>
        </TaskButton>
        <TaskButton label="Explorer" open>
          <svg viewBox="0 0 34 30" width="34" height="30">
            <path d="M3 3q0-1 1-1h7l2 3h18v22H2z" fill="#e8cf74" stroke="#b89a44" strokeWidth=".6" />
            <path d="M6 3h6v3H6zM15 4h6v3h-6zM23 5h6v3h-6z" fill="#fff" /><path d="M6 3h3v2H6z" fill="#3a3" /><path d="M15 4h3v2h-3z" fill="#c33" /><path d="M24 5h3v2h-3z" fill="#48c" />
            <path d="M1 9h30l1 16q0 2-2 2H3q-2 0-2-2z" fill="#f6e6a2" /><path d="M7 29v-8q0-2 2-2h16q2 0 2 2v8h-4v-6H11v6z" fill="#a8d8f0" stroke="#5aa0cc" />
          </svg>
        </TaskButton>
        <TaskButton label="Media Player">
          <svg viewBox="0 0 28 26" width="27" height="25"><path d="M17 2h7v22h-7z" fill="#9cc8e8" stroke="#5a9ccc" /><path d="M1 2h19v22H1z" fill="#b4d8f0" stroke="#6aa8d4" /><circle cx="11" cy="13" r="9" fill="#f08020" /><path d="M8 8l9 5-9 5z" fill="#fff" /></svg>
        </TaskButton>
        <div className="flex gap-[3px]">
          <TaskButton label="Chrome" open>
            <svg viewBox="0 0 30 30" width="30" height="30">
              <path d="M15 15L2.500 8A14.300 14.300 0 0 1 28 9.500L15 9z" fill="#dd4433" /><path d="M15 15L2.500 8A14.300 14.300 0 0 0 14 29.300L20 18z" fill="#3aa757" /><path d="M15 9h13a14.300 14.300 0 0 1-14 20.300L20.500 18z" fill="#fcd020" />
              <circle cx="15" cy="15" r="6.800" fill="#fff" /><circle cx="15" cy="15" r="5.300" fill="#4080d8" />
            </svg>
          </TaskButton>
          <TaskButton label="Word" open>
            <svg viewBox="0 0 30 30" width="31" height="31">
              <path d="M6 1h18l5 5v23H6z" fill="#fff" stroke="#3a66b0" /><path d="M22 16h5M22 19h5M10 24h17" stroke="#88a8d8" /><path d="M8 28L29 14v14z" fill="#2f5fb4" />
              <path d="M1 4l20-2v19L1 22z" fill="#e8f0fa" stroke="#7a9ccc" /><text x="11" y="18" textAnchor="middle" fontSize="18" fontWeight="700" fontFamily={face} fill="#1d4fa4">W</text>
            </svg>
          </TaskButton>
          <TaskButton label="ARES" active><AresLogo /></TaskButton>
          <TaskButton label="Paint" open>
            <svg viewBox="0 0 32 30" width="32" height="30">
              <path d="M2 19Q1 9 13 7q12-1 14 8 0 5-6 5-4 1-1 5-2 4-8 3Q3 26 2 19z" fill="#e6eef6" stroke="#8fa4b8" />
              <circle cx="7" cy="17" r="2.500" fill="#d33" /><circle cx="10" cy="12" r="2.300" fill="#3a3" /><circle cx="16" cy="10.500" r="2.300" fill="#e8c020" /><circle cx="21" cy="13" r="2" fill="#d6742a" /><circle cx="14" cy="19" r="2.600" fill="#4a9cd0" />
              <path d="M16 28L24 7l3 1-8 20z" fill="#d88a3a" /><path d="M23 8l2-6 5-1-1 5-2 4z" fill="#8a5a34" />
            </svg>
          </TaskButton>
        </div>
      </div>
      <div className="ml-auto flex items-center">
        <span className="mr-[17px] mb-1">ES</span>
        <svg viewBox="0 0 8 5" width="7" height="5" className="mr-[13px]"><path d="M0 5h8L4 0z" fill="#fff" /></svg>
        <Ic><path d="M2 8h13l2 4v4H1v-4z" fill="#9aa4a8" stroke="#445" /><path d="M3 1h4v4H3z" fill="#d64" /><path d="M8 1h4v4H8z" fill="#4b4" /><path d="M5 5h4v4H5z" fill="#48d" /><path d="M10 5h4v4h-4z" fill="#ec3" /><path d="M4 14h8" stroke="#3d3" /></Ic>
        <div className="ml-3 flex items-center gap-[6px]">
          <Ic><path d="M3 2v15" stroke="#fff" strokeWidth="1.500" /><path d="M4 2q4-1 6 1 3 1 5 0v7q-3 1-5 0-3-1-6 0z" fill="#fff" /><circle cx="12" cy="12.500" r="5" fill="#d02020" /><path d="M10 10.500l4 4M14 10.500l-4 4" stroke="#fff" strokeWidth="1.500" /></Ic>
          <Ic><path d="M3 16v-3M6 16v-4M9 16V9M12 16V6" stroke="#fff" strokeWidth="2" /><path d="M15.500 16V3" stroke="#7894b8" strokeWidth="2" /></Ic>
          <Ic><path d="M3 4h6v12H3z" fill="none" stroke="#fff" strokeWidth="1.500" /><path d="M5 2h3" stroke="#fff" strokeWidth="2" /><path d="M7 6h9v4q-1 3-4 3t-5-3z" fill="#fff" stroke="#1a4f8e" /><path d="M10 3v4M14 3v4M12 13v4" stroke="#fff" strokeWidth="1.500" /></Ic>
          <Ic><path d="M3 6h3l4-4v14l-4-4H3z" fill="#fff" /><path d="M12 6q2 3 0 6M14 4q3 5 0 10" fill="none" stroke="#cde" /></Ic>
          <Ic><path d="M6 1h6l6 10h-6z" fill="#f8cc30" /><path d="M6 1l3 5-6 11-3-6z" fill="#2fa45c" /><path d="M6 11h12l-3 6H3z" fill="#3f74dc" /></Ic>
        </div>
        <div className="ml-[14px] w-[60px] text-center leading-[18px] whitespace-nowrap">12:13<br />14/10/2012</div>
      </div>
      <button type="button" aria-label="Show desktop" className="mr-[2px] ml-[13px] h-[38px] w-3 border border-white/50 bg-white/20" />
    </footer>
  );
}

export default function App() {
  return (
    <div className="flex h-screen min-h-[720px] flex-col overflow-hidden bg-[#efefef]">
      <TitleBar />
      <MenuBar />
      <div className="flex h-[32px] shrink-0 items-center border-t-2 border-white bg-[#efefef] pb-[5px] pl-[2px]">
        <Grip />
        <span className="w-[2px]" />
        <ToolRow tools={mainTools} />
      </div>
      <main className="relative flex min-h-0 flex-1">
        <SideBar />
        <ObjectPanel />
        <Board />
        <span className="w-1 shrink-0" />
        <CadcamDialog />
      </main>
      <div className="h-1 shrink-0" />
      <StatusBar />
      <TaskBar />
    </div>
  );
}
